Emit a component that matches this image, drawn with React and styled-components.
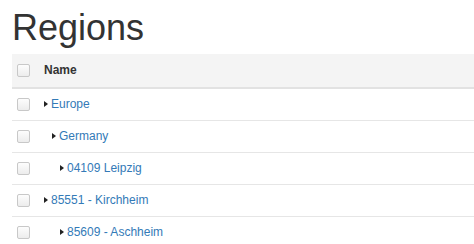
import React from "react";
import styled, { createGlobalStyle } from "styled-components";

const Global = createGlobalStyle`
  html, body { margin: 0; padding: 0; background: #fff; }
  body { font-family: "Liberation Sans", Arial, sans-serif; color: #333; font-size: 12px; }
`;

const Page = styled.div`
  padding: 0 0 0 12px;
`;

const Title = styled.h1`
  margin: 8px 0 6px;
  font-size: 36px;
  font-weight: 400;
  line-height: 39.6px;
  color: #333;
`;

const Table = styled.div`
  display: flex;
  flex-direction: column;
  width: 462px;
`;

const HeadRow = styled.div`
  display: flex;
  align-items: center;
  height: 33px;
  background: #f4f4f4;
  border-bottom: 2px solid #e2e2e2;
`;

const Row = styled.div`
  display: flex;
  align-items: center;
  height: 31px;
  border-bottom: 1px solid #e6e6e6;
`;

const CheckCell = styled.div`
  width: 32px;
  display: flex;
  align-items: center;
  padding-left: 5px;
  box-sizing: border-box;
`;

const Box = styled.span`
  width: 13px;
  height: 13px;
  box-sizing: border-box;
  border: 1px solid #c8c8c8;
  border-radius: 2px;
  background: linear-gradient(#fdfdfd, #ececec);
`;

const HeadLabel = styled.span`
  font-weight: 700;
  font-size: 12px;
  color: #333;
`;

const NameCell = styled.div`
  display: flex;
  align-items: center;
  padding-left: ${(p) => p.$level * 8}px;
`;

const Caret = styled.span`
  width: 0;
  height: 0;
  border-top: 3px solid transparent;
  border-bottom: 3px solid transparent;
  border-left: 4px solid #222;
  margin-right: 3px;
`;

const Link = styled.a`
  color: #337ab7;
  text-decoration: none;
  font-size: 12px;
`;

const rows = [
  { name: "Europe", level: 0 },
  { name: "Germany", level: 1 },
  { name: "04109 Leipzig", level: 2 },
  { name: "85551 - Kirchheim", level: 0 },
  { name: "85609 - Aschheim", level: 2 },
];

export default function App() {
  return (
    <Page>
      <Global />
      <Title>Regions</Title>
      <Table>
        <HeadRow>
          <CheckCell><Box /></CheckCell>
          <HeadLabel>Name</HeadLabel>
        </HeadRow>
        {rows.map((r) => (
          <Row key={r.name}>
            <CheckCell><Box /></CheckCell>
            <NameCell $level={r.level}>
              <Caret />
              <Link href="#">{r.name}</Link>
            </NameCell>
          </Row>
        ))}
      </Table>
    </Page>
  );
}
